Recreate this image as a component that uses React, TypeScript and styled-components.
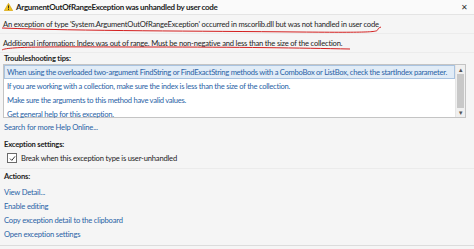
import React from "react";
import styled, { createGlobalStyle } from "styled-components";

const Global = createGlobalStyle`
  html, body {
    margin: 0;
    padding: 0;
    background: #f5f5f5;
  }
  body {
    font-family: Lato, "Open Sans", sans-serif;
    font-size: 7.6px;
    letter-spacing: -0.2px;
    color: #1e1e1e;
  }
`;

const Dialog = styled.div`
  width: 474px;
  height: 249px;
  box-sizing: border-box;
  background: #f5f5f5;
  display: flex;
  flex-direction: column;
  position: relative;
  overflow: hidden;
`;

const TitleBar = styled.div`
  height: 14px;
  display: flex;
  align-items: center;
  gap: 3px;
  padding: 0 6px 0 4px;
  background: #fafafa;
  border-bottom: 1px solid #e4e4e4;
  font-weight: 700;
  font-size: 8px;
  letter-spacing: -0.3px;
`;

const TitleText = styled.span`
  flex: 1;
`;

const Close = styled.span`
  font-size: 8px;
  font-weight: 400;
  color: #333;
`;

const Message = styled.div`
  padding: 0 3px;
  height: 18px;
  line-height: 18px;
  white-space: nowrap;
  border-bottom: 1px solid #ececec;
`;

const Heading = styled.div<{ $top?: number; $h?: number }>`
  padding: 0 4px;
  font-weight: 700;
  line-height: ${(p) => p.$h ?? 13}px;
  margin-top: ${(p) => p.$top ?? 0}px;
`;

const ListBox = styled.div`
  margin: 0 8px 0 3px;
  height: 54px;
  box-sizing: border-box;
  border: 1px solid #c4c4c4;
  background: #fff;
  display: flex;
`;

const ListItems = styled.div`
  flex: 1;
  min-width: 0;
  display: flex;
  flex-direction: column;
  letter-spacing: -0.27px;
`;

const ListItem = styled.div<{ $selected?: boolean }>`
  height: 14px;
  line-height: 12px;
  box-sizing: border-box;
  padding: 0 2px;
  white-space: nowrap;
  color: #2a63a6;
  background: ${(p) => (p.$selected ? "#e1ecf7" : "transparent")};
  border: 1px solid ${(p) => (p.$selected ? "#a9c3e0" : "transparent")};
`;

const ScrollBar = styled.div`
  width: 9px;
  display: flex;
  flex-direction: column;
  align-items: center;
  background: #f0f0f0;
  border-left: 1px solid #e6e6e6;
`;

const Arrow = styled.span`
  height: 9px;
  line-height: 9px;
  font-size: 6px;
  color: #555;
`;

const Thumb = styled.div`
  flex: 1;
  width: 7px;
  background: #c8c8c8;
`;

const Link = styled.div<{ $top?: number }>`
  padding: 0 4px;
  line-height: 14px;
  color: #2a63a6;
  margin-top: ${(p) => p.$top ?? 0}px;
`;

const CheckRow = styled.div`
  display: flex;
  align-items: center;
  gap: 4px;
  padding: 0 7px;
  height: 14px;
`;

const Box = styled.span`
  width: 8px;
  height: 8px;
  border: 1px solid #6a6a6a;
  background: #fff;
  display: flex;
  align-items: center;
  justify-content: center;
`;

const Divider = styled.div`
  height: 1px;
  background: #ebebeb;
  margin: 3px 0 1px;
`;

const Footer = styled.div`
  margin-top: auto;
  height: 3px;
  border-top: 1px solid #dcdcdc;
`;

const Scribble = styled.svg`
  position: absolute;
  left: 0;
  top: 0;
  pointer-events: none;
`;

const WarnIcon = () => (
  <svg width="9" height="8" viewBox="0 0 9 8">
    <path d="M4.5 0.3 L8.8 7.7 L0.2 7.7 Z" fill="#f2c31a" stroke="#c99300" strokeWidth="0.5" />
    <rect x="4.1" y="2.4" width="0.9" height="3" fill="#222" />
    <rect x="4.1" y="6" width="0.9" height="0.9" fill="#222" />
  </svg>
);

const Check = () => (
  <svg width="7" height="7" viewBox="0 0 7 7">
    <path d="M1 3.6 L2.8 5.4 L6 1.4" fill="none" stroke="#333" strokeWidth="1" />
  </svg>
);

export default function App() {
  return (
    <>
      <Global />
      <Dialog>
        <TitleBar>
          <WarnIcon />
          <TitleText>ArgumentOutOfRangeException was unhandled by user code</TitleText>
          <Close>✕</Close>
        </TitleBar>
        <Message>
          An exception of type 'System.ArgumentOutOfRangeException' occurred in mscorlib.dll but was not handled in user code
        </Message>
        <Message>
          Additional information: Index was out of range. Must be non-negative and less than the size of the collection.
        </Message>
        <Heading $h={11}>Troubleshooting tips:</Heading>
        <ListBox>
          <ListItems>
            <ListItem $selected>
              When using the overloaded two-argument FindString or FindExactString methods with a ComboBox or ListBox, check the startIndex parameter.
            </ListItem>
            <ListItem>If you are working with a collection, make sure the index is less than the size of the collection.</ListItem>
            <ListItem>Make sure the arguments to this method have valid values.</ListItem>
            <ListItem>Get general help for this exception.</ListItem>
          </ListItems>
          <ScrollBar>
            <Arrow>▲</Arrow>
            <Thumb />
            <Arrow>▼</Arrow>
          </ScrollBar>
        </ListBox>
        <Link $top={2}>Search for more Help Online...</Link>
        <Heading $top={4}>Exception settings:</Heading>
        <CheckRow>
          <Box>
            <Check />
          </Box>
          Break when this exception type is user-unhandled
        </CheckRow>
        <Divider />
        <Heading>Actions:</Heading>
        <Link $top={2}>View Detail...</Link>
        <Link>Enable editing</Link>
        <Link>Copy exception detail to the clipboard</Link>
        <Link>Open exception settings</Link>
        <Footer />
        <Scribble width="474" height="249">
          <path d="M2 28 C 80 31, 200 31, 300 32 S 370 31, 381 27" fill="none" stroke="#d42020" strokeWidth="1" />
          <path d="M2 50 C 8 46, 60 47, 150 47 S 300 48, 350 49" fill="none" stroke="#d42020" strokeWidth="1" />
        </Scribble>
      </Dialog>
    </>
  );
}
